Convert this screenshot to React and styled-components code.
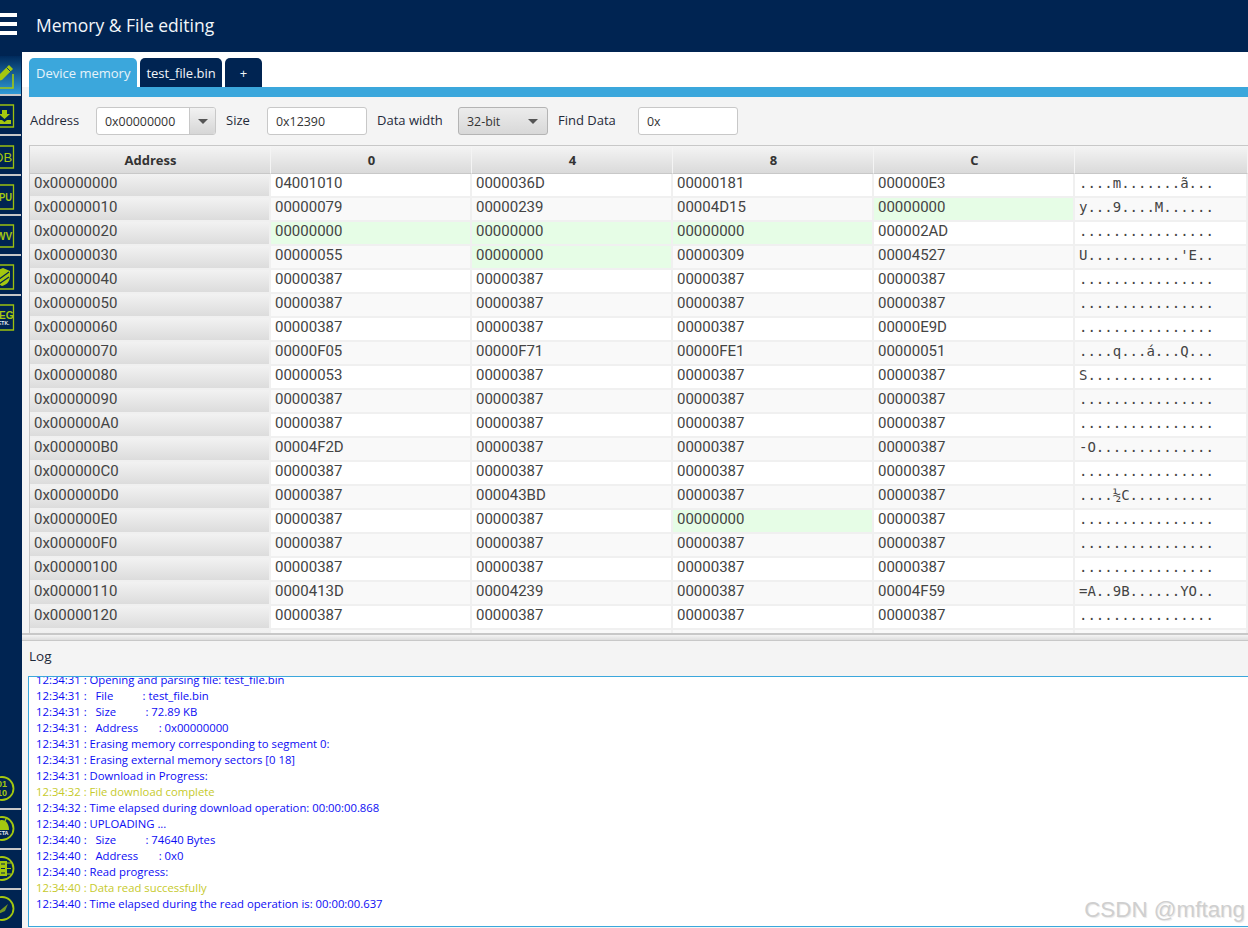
import React from 'react';
import styled, { createGlobalStyle } from 'styled-components';

const navy = '#002452';
const lime = '#a4c80f';
const sans = '"Open Sans", "Noto Sans", sans-serif';
const mono = '"DejaVu Sans Mono", "Liberation Mono", monospace';

const GlobalStyle = createGlobalStyle`
  html, body { margin: 0; padding: 0; background: #f4f4f4; }
  body { font-family: ${sans}; overflow: hidden; }
  * { box-sizing: border-box; }
`;

const Page = styled.div`
  position: relative;
  width: 1248px;
  height: 928px;
  overflow: hidden;
  display: flex;
  flex-direction: column;
`;

const Header = styled.header`
  height: 52px;
  flex: none;
  background: ${navy};
  display: flex;
  align-items: center;
`;

const Burger = styled.div`
  width: 17px;
  height: 22px;
  margin-top: -4px;
  display: flex;
  flex-direction: column;
  justify-content: space-between;
  span { display: block; height: 4px; background: #fff; }
`;

const Title = styled.h1`
  margin: -2px 0 0 19px;
  font-size: 17.5px;
  font-weight: 400;
  color: #f2f6fa;
`;

const Body = styled.div`
  flex: 1;
  display: flex;
  min-height: 0;
`;

const Sidebar = styled.nav`
  width: 22px;
  flex: none;
  background: ${navy};
  overflow: hidden;
  padding-top: 4px;
`;

const NavItem = styled.div`
  width: 21px;
  height: 40px;
  border-bottom: 2px solid ${p => (p.$last ? 'transparent' : '#c8c8c8')};
  background: ${p => (p.$active ? 'linear-gradient(#002a5c, #2f9ad6)' : 'transparent')};
  svg { display: block; }
`;

const BottomGroup = styled.div`
  margin-top: 434px;
`;

const Main = styled.main`
  flex: 1;
  min-width: 0;
  display: flex;
  flex-direction: column;
  background: #f4f4f4;
`;

const TabStrip = styled.div`
  height: 35px;
  flex: none;
  background: #fff;
  display: flex;
  align-items: flex-end;
  gap: 3px;
  padding-left: 7px;
`;

const Tab = styled.div`
  height: 29px;
  padding: 0 ${p => p.$pad || 6}px;
  border-radius: 5px 5px 0 0;
  background: ${p => (p.$active ? '#3ba7dc' : navy)};
  color: ${p => (p.$active ? '#e6f3fa' : '#f2f6fa')};
  font-size: 13px;
  display: flex;
  align-items: center;
`;

const TabLine = styled.div`
  height: 10px;
  flex: none;
  margin-left: 7px;
  background: #3ba7dc;
`;

const Toolbar = styled.div`
  height: 48px;
  flex: none;
  display: flex;
  align-items: center;
  padding: 0 0 0 8px;
  font-size: 13px;
  color: #1f2a3a;
`;

const Label = styled.span`
  width: ${p => p.$w}px;
  flex: none;
  margin-top: -2px;
`;

const Field = styled.div`
  width: ${p => p.$w}px;
  height: 28px;
  flex: none;
  display: flex;
  align-items: center;
  padding-left: 8px;
  background: #fff;
  border: 1px solid #c8c8c8;
  border-radius: 3px;
  font-size: 12.4px;
  color: #333;
  margin-right: 10px;
`;

const Combo = styled(Field)`
  padding-left: 0;
  overflow: hidden;
`;

const ComboText = styled.span`
  flex: 1;
  padding-left: 8px;
`;

const Arrow = styled.span`
  width: 0;
  height: 0;
  border-left: 5px solid transparent;
  border-right: 5px solid transparent;
  border-top: 5px solid #555;
`;

const ComboButton = styled.span`
  width: 26px;
  height: 100%;
  display: flex;
  align-items: center;
  justify-content: center;
  border-left: 1px solid #c8c8c8;
  background: linear-gradient(#f2f2f2, #d6d6d6);
`;

const Select = styled(Field)`
  background: linear-gradient(#ececec, #d8d8d8);
  border-color: #b4b4b4;
  justify-content: space-between;
  padding-right: 9px;
`;

const TableWrap = styled.div`
  height: 488px;
  flex: none;
  margin-left: 7px;
  background: #f0f0f0;
  border-left: 1px solid #c8c8c8;
  border-top: 1px solid #c8c8c8;
  overflow: hidden;
`;

const Grid = styled.div`
  display: grid;
  grid-template-columns: 241px 201px 201px 201px 201px 1fr;
`;

const HeadCell = styled.div`
  height: 28px;
  padding-left: 1px;
  display: flex;
  align-items: center;
  justify-content: center;
  background: linear-gradient(#f4f4f4, #dadada);
  border-right: 1px solid #f4f4f4;
  border-bottom: 1px solid #c8c8c8;
  font-size: 13px;
  font-weight: 700;
  color: #333;
`;

const Cell = styled.div`
  height: 24px;
  padding: 0 0 4px 4px;
  display: flex;
  align-items: center;
  white-space: pre;
  font-family: ${p => (p.$ascii ? mono : 'Roboto, sans-serif')};
  font-size: ${p => (p.$ascii ? 14 : 15)}px;
  color: #444;
  border-right: 2px solid #f0f0f0;
  border-bottom: 2px solid #f0f0f0;
  background: ${p => (p.$green ? '#e6fde6' : p.$odd ? '#f9f9f9' : '#fff')};
`;

const AddressCell = styled(Cell)`
  background: linear-gradient(#f2f2f2, #dcdcdc);
`;

const Divider = styled.div`
  height: 8px;
  flex: none;
  border-top: 2px solid #c8c8c8;
  border-bottom: 1px solid #c8c8c8;
  background: linear-gradient(#f4f4f4, #dedede);
`;

const LogHead = styled.div`
  height: 35px;
  flex: none;
  padding: 0 0 5px 7px;
  display: flex;
  align-items: center;
  font-size: 13.5px;
  color: #1f2a3a;
`;

const LogBox = styled.div`
  flex: 1;
  min-height: 0;
  margin: 0 -3px 1px 6px;
  background: #fff;
  border: 1px solid #3ba7dc;
  overflow: hidden;
`;

const LogList = styled.div`
  margin-top: -5px;
  padding-left: 7px;
`;

const LogLine = styled.div`
  height: 16px;
  line-height: 16px;
  font-size: 11.3px;
  white-space: pre;
  color: ${p => (p.$ok ? '#c6ca2c' : '#0c0cf4')};
`;

const Watermark = styled.div`
  position: absolute;
  right: 3px;
  bottom: 5px;
  font-family: "Liberation Sans", Arial, sans-serif;
  font-size: 22.4px;
  color: #cfcfcf;
  text-shadow: 1px 1px 1px #e8e8e8;
`;

const Glyph = styled.text`
  font-family: "Liberation Sans", Arial, sans-serif;
  font-weight: ${p => p.$weight || 400};
  fill: ${p => p.$fill || lime};
`;

const Icon = ({ children }) => (
  <svg width="21" height="38" viewBox="0 0 21 38">
    {children}
  </svg>
);

const BoxIcon = ({ top = 9, h = 24, children }) => (
  <Icon>
    <path d={`M-2 ${top}H13.5V${top + h}H-2`} fill="none" stroke="#9cc00e" strokeWidth="1.3" />
    {children}
  </Icon>
);

const CircleIcon = ({ children }) => (
  <Icon>
    <circle cx="2" cy="18.5" r="11.5" fill="none" stroke={lime} strokeWidth="1.8" />
    {children}
  </Icon>
);

const topIcons = [
  <Icon key="edit">
    <path d="M13 18V32H-2" fill="none" stroke={lime} strokeWidth="1.6" />
    <path d="M9 9L13 13L2 24L-3 25L-2 20Z" fill={lime} />
    <path d="M6.5 11.5L10.5 15.5" stroke="#0a3a72" strokeWidth="1" />
  </Icon>,
  <BoxIcon key="dl" top={9} h={22}>
    <path d="M2 14H7V18H10L4.5 23L-1 18H2Z" fill={lime} />
    <path d="M-2 24H2L4.5 26L7 24H11V28H-2Z" fill={lime} />
  </BoxIcon>,
  <BoxIcon key="ob" top={10} h={22}>
    <Glyph x="-6" y="26" fontSize="13">DB</Glyph>
  </BoxIcon>,
  <BoxIcon key="cpu" top={9} h={24}>
    <Glyph x="-1" y="25" fontSize="11" $weight={700} textLength="13" lengthAdjust="spacingAndGlyphs">PU</Glyph>
  </BoxIcon>,
  <BoxIcon key="wv" top={9} h={22}>
    <Glyph x="-4" y="24" fontSize="10" $weight={700}>WV</Glyph>
  </BoxIcon>,
  <BoxIcon key="shield" top={9} h={24}>
    <path d="M-2 14L3 12L10 15V20C10 26 6 29 2 30C0 29 -2 27 -2 25Z" fill={lime} />
    <path d="M-2 24L9 16M-1 28L9 21" stroke={navy} strokeWidth="1.3" />
  </BoxIcon>,
  <BoxIcon key="eg" top={9} h={25}>
    <Glyph x="-1" y="23" fontSize="10" $weight={700}>EG</Glyph>
    <Glyph x="-2" y="29" fontSize="5" $weight={700} $fill="#e8eef4">ETK.</Glyph>
  </BoxIcon>,
];

const bottomIcons = [
  <CircleIcon key="bin">
    <Glyph x="-3" y="17" fontSize="9" $weight={700}>01</Glyph>
    <Glyph x="-3" y="26" fontSize="9" $weight={700}>10</Glyph>
  </CircleIcon>,
  <Icon key="beta">
    <circle cx="2" cy="18.5" r="11.5" fill="none" stroke={lime} strokeWidth="1.8" />
    <path d="M-5 20C-5 13 -1 10 2 10C6 10 9 14 9 20Z" fill={lime} />
    <path d="M5 11L7 7" stroke={lime} strokeWidth="1.2" />
    <rect x="-4" y="20" width="13" height="6" fill={navy} />
    <Glyph x="-2" y="25" fontSize="5.5" $weight={700} $fill="#e8eef4">ETA</Glyph>
  </Icon>,
  <CircleIcon key="chip">
    <rect x="-1" y="11" width="8" height="15" fill={lime} />
    <path d="M1 14H5M1 18.5H5M1 23H5" stroke={navy} strokeWidth="1.2" />
    <path d="M7 13H11M7 18.5H11M7 24H11" stroke={lime} strokeWidth="1.2" />
  </CircleIcon>,
  <CircleIcon key="rocket">
    <path d="M-2 22L8 14L5 21L-2 24Z" fill={lime} opacity="0.7" />
  </CircleIcon>,
];

const R = '00000387';
const DOTS = '................';
const rows = [
  ['0x00000000', '04001010', '0000036D', '00000181', '000000E3', '....m.......ã...'],
  ['0x00000010', '00000079', '00000239', '00004D15', '00000000', 'y...9....M......', [3]],
  ['0x00000020', '00000000', '00000000', '00000000', '000002AD', DOTS, [0, 1, 2]],
  ['0x00000030', '00000055', '00000000', '00000309', '00004527', "U...........'E..", [1]],
  ['0x00000040', R, R, R, R, DOTS],
  ['0x00000050', R, R, R, R, DOTS],
  ['0x00000060', R, R, R, '00000E9D', DOTS],
  ['0x00000070', '00000F05', '00000F71', '00000FE1', '00000051', '....q...á...Q...'],
  ['0x00000080', '00000053', R, R, R, 'S...............'],
  ['0x00000090', R, R, R, R, DOTS],
  ['0x000000A0', R, R, R, R, DOTS],
  ['0x000000B0', '00004F2D', R, R, R, '-O..............'],
  ['0x000000C0', R, R, R, R, DOTS],
  ['0x000000D0', R, '000043BD', R, R, '....½C..........'],
  ['0x000000E0', R, R, '00000000', R, DOTS, [2]],
  ['0x000000F0', R, R, R, R, DOTS],
  ['0x00000100', R, R, R, R, DOTS],
  ['0x00000110', '0000413D', '00004239', R, '00004F59', '=A..9B......YO..'],
  ['0x00000120', R, R, R, R, DOTS],
  ['', '', '', '', '', ''],
];

const logLines = [
  ['12:34:31 : Opening and parsing file: test_file.bin'],
  ['12:34:31 :   File          : test_file.bin'],
  ['12:34:31 :   Size          : 72.89 KB'],
  ['12:34:31 :   Address       : 0x00000000'],
  ['12:34:31 : Erasing memory corresponding to segment 0:'],
  ['12:34:31 : Erasing external memory sectors [0 18]'],
  ['12:34:31 : Download in Progress:'],
  ['12:34:32 : File download complete', true],
  ['12:34:32 : Time elapsed during download operation: 00:00:00.868'],
  ['12:34:40 : UPLOADING ...'],
  ['12:34:40 :   Size          : 74640 Bytes'],
  ['12:34:40 :   Address       : 0x0'],
  ['12:34:40 : Read progress:'],
  ['12:34:40 : Data read successfully', true],
  ['12:34:40 : Time elapsed during the read operation is: 00:00:00.637'],
];

export default function App() {
  return (
    <Page>
      <GlobalStyle />
      <Header>
        <Burger><span /><span /><span /></Burger>
        <Title>Memory &amp; File editing</Title>
      </Header>
      <Body>
        <Sidebar>
          {topIcons.map((icon, i) => (
            <NavItem key={i} $active={i === 0} $last={i === topIcons.length - 1}>{icon}</NavItem>
          ))}
          <BottomGroup>
            {bottomIcons.map((icon, i) => <NavItem key={i}>{icon}</NavItem>)}
          </BottomGroup>
        </Sidebar>
        <Main>
          <TabStrip>
            <Tab $active $pad={7}>Device memory</Tab>
            <Tab>test_file.bin</Tab>
            <Tab $pad={15}>+</Tab>
          </TabStrip>
          <TabLine />
          <Toolbar>
            <Label $w={66}>Address</Label>
            <Combo $w={120}>
              <ComboText>0x00000000</ComboText>
              <ComboButton><Arrow /></ComboButton>
            </Combo>
            <Label $w={41}>Size</Label>
            <Field $w={100}>0x12390</Field>
            <Label $w={81}>Data width</Label>
            <Select $w={90}>32-bit<Arrow /></Select>
            <Label $w={80}>Find Data</Label>
            <Field $w={100}>0x</Field>
          </Toolbar>
          <TableWrap>
            <Grid>
              {['Address', '0', '4', '8', 'C', ''].map((h, i) => <HeadCell key={i}>{h}</HeadCell>)}
              {rows.map((r, y) => {
                const odd = y % 2 === 1;
                const green = r[6] || [];
                return (
                  <React.Fragment key={y}>
                    <AddressCell>{r[0]}</AddressCell>
                    {[1, 2, 3, 4].map(c => (
                      <Cell key={c} $odd={odd} $green={green.includes(c - 1)}>{r[c]}</Cell>
                    ))}
                    <Cell $odd={odd} $ascii>{r[5]}</Cell>
                  </React.Fragment>
                );
              })}
            </Grid>
          </TableWrap>
          <Divider />
          <LogHead>Log</LogHead>
          <LogBox>
            <LogList>
              {logLines.map(([text, ok], i) => <LogLine key={i} $ok={ok}>{text}</LogLine>)}
            </LogList>
          </LogBox>
        </Main>
      </Body>
      <Watermark>CSDN @mftang</Watermark>
    </Page>
  );
}
